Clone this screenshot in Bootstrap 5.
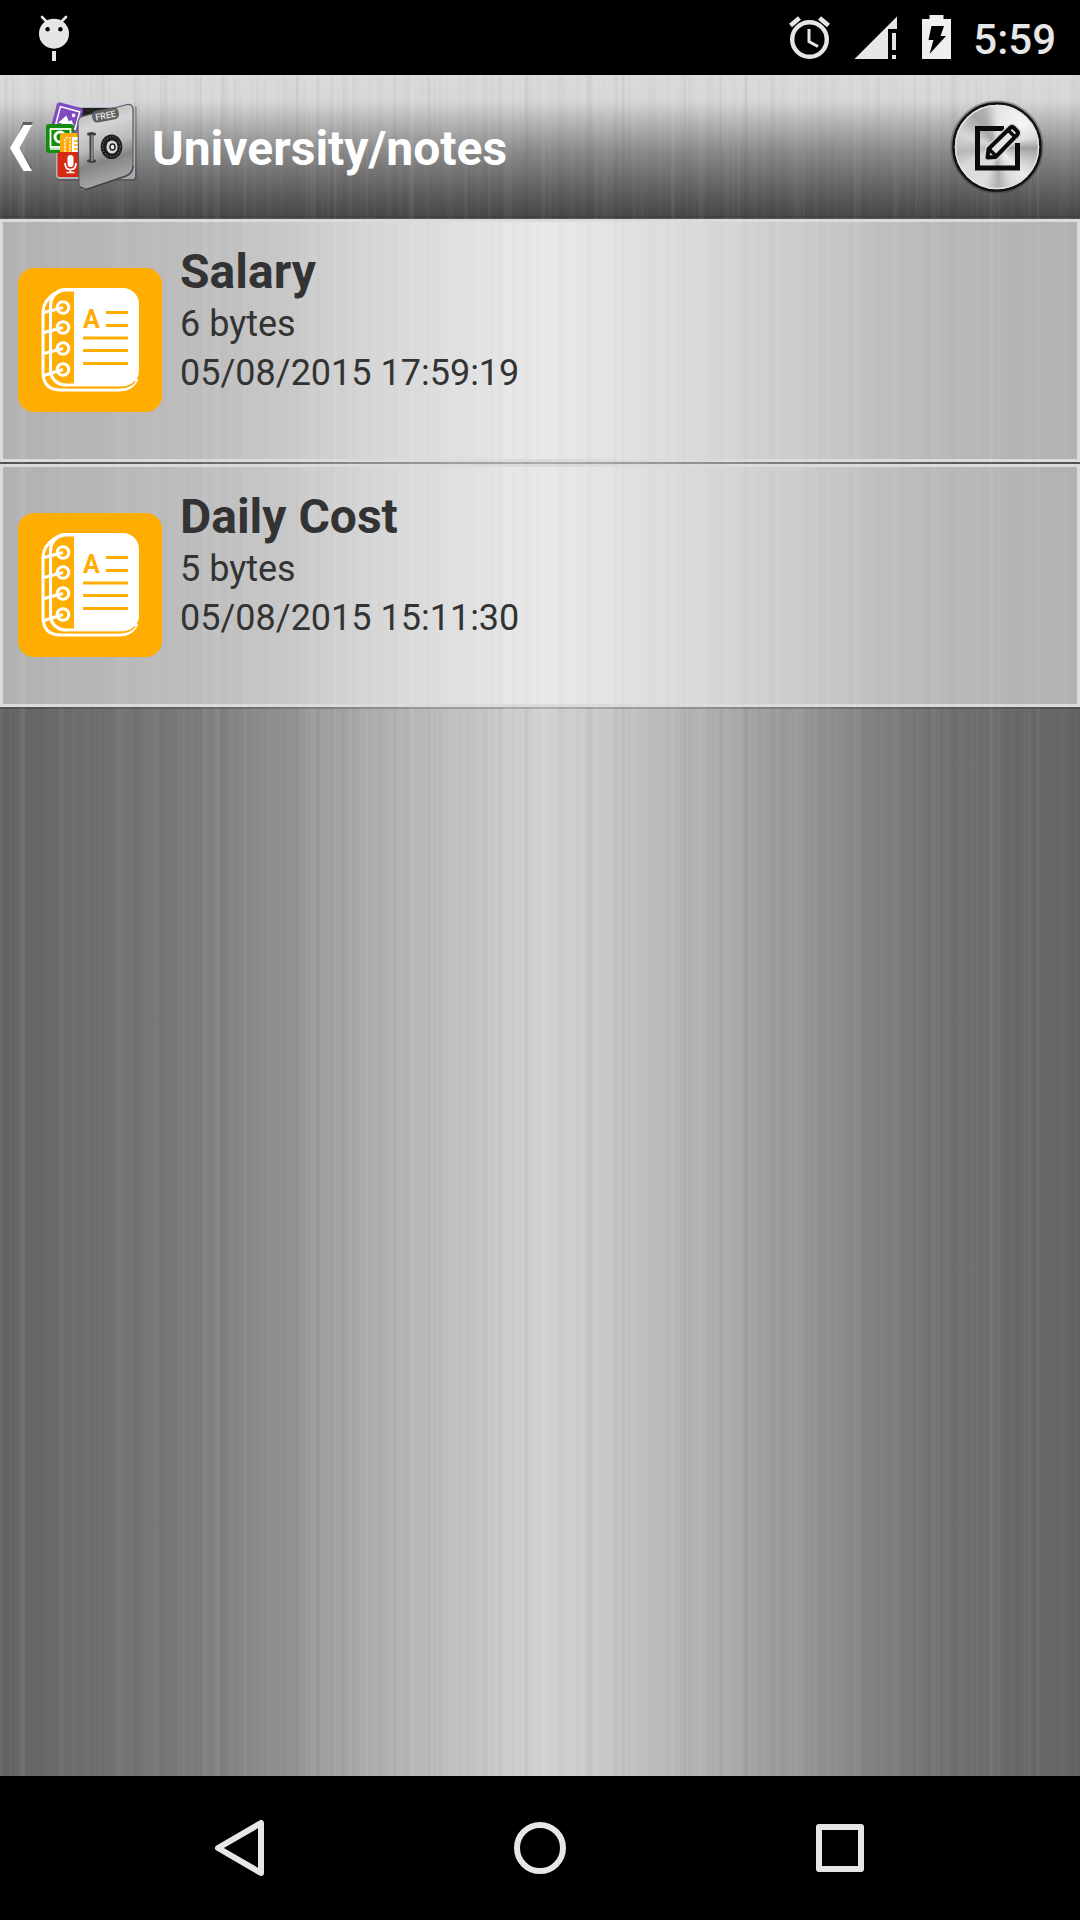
<!DOCTYPE html>
<html lang="en">
<head>
<meta charset="utf-8">
<meta name="viewport" content="width=device-width, initial-scale=1">
<title>University/notes</title>
<link href="https://cdn.jsdelivr.net/npm/bootstrap@5.3.0/dist/css/bootstrap.min.css" rel="stylesheet">
<style>
  :root {
    --grain:
      repeating-linear-gradient(90deg, rgba(255,255,255,.04) 0 2px, transparent 3px 11px, rgba(0,0,0,.025) 12px 14px, transparent 15px 22px, rgba(255,255,255,.03) 23px 24px, transparent 25px 37px, rgba(0,0,0,.02) 38px 43px, transparent 44px 61px),
      repeating-linear-gradient(90deg, transparent 0 5px, rgba(0,0,0,.03) 6px 7px, transparent 8px 19px, rgba(255,255,255,.04) 20px 25px, transparent 26px 40px, rgba(0,0,0,.03) 41px 42px, transparent 43px 58px, rgba(255,255,255,.03) 59px 61px, transparent 62px 97px),
      repeating-linear-gradient(90deg, transparent 0 17px, rgba(255,255,255,.03) 18px 19px, transparent 20px 33px, rgba(0,0,0,.03) 34px 36px, transparent 37px 71px, rgba(255,255,255,.04) 72px 74px, transparent 75px 90px, rgba(0,0,0,.03) 91px 92px, transparent 93px 131px),
      repeating-linear-gradient(90deg, transparent 0 4px, rgba(0,0,0,.02) 5px 6px, transparent 7px 9px, rgba(255,255,255,.02) 10px 11px, transparent 12px 13px);
  }
  body {
    font-family: Roboto, "Noto Sans", sans-serif;
    color: #333;
    background-color: #000;
  }
  .status-bar { height: 75px; background: #000; color: #e6e6e6; padding: 0 24px 0 36px; }
  .clock { font-size: 42px; line-height: 48px; font-weight: 500; padding-top: 4px; margin-left: 22px; }
  .title-bar {
    height: 144px;
    padding: 0 36px 0 8px;
    background: var(--grain), linear-gradient(#dadada 0, #d6d6d6 18%, #b4b4b4 33%, #8c8c8c 52%, #696767 75%, #484848 98%, #3c3c3c 98%, #555 100%);
  }
  .title-bar h1 { font-size: 48px; line-height: 56px; font-weight: 700; color: #fff; margin-left: 12px; padding-top: 4px; }
  .round-btn { width: 94px; height: 94px; }
  .steel {
    background: var(--grain), linear-gradient(90deg, #646464 0, #6c6c6c 7%, #7b7b7b 18%, #909090 26%, #acacac 34%, #c0c0c0 42%, #d2d2d2 50%, #cacaca 55%, #bebebe 60%, #b2b2b2 65%, #a2a2a2 70%, #929292 76%, #818181 81%, #747474 86%, #6b6b6b 93%, #646464 100%);
  }
  .note-item {
    border: 3px solid #dbdbdb;
    background: rgba(255,255,255,.5);
    background-clip: padding-box;
    padding: 22px 15px 0;
    height: 243px;
    gap: 18px;
    color: #333;
  }
  .note-item:hover { color: #333; }
  .note-row { border-bottom: 2px solid rgba(0,0,0,.18); }
  .note-icon { margin-top: 24px; }
  .note-name { font-size: 48px; line-height: 56px; font-weight: 700; }
  .note-info { font-size: 36px; line-height: 49px; }
  .nav-keys { height: 144px; background: #000; }
  .nav-keys button { width: 300px; height: 144px; }
</style>
</head>
<body class="min-vh-100 d-flex flex-column">

<div class="status-bar d-flex align-items-center justify-content-between">
  <svg width="36" height="75" viewBox="0 0 36 75" fill="#e6e6e6" aria-hidden="true">
    <circle cx="18" cy="33.700" r="15"/>
    <path d="M6 17l5 5M30 17l-5 5" stroke="#e6e6e6" stroke-width="2.600" stroke-linecap="round"/>
    <circle cx="11.600" cy="29.300" r="2.200" fill="#000"/><circle cx="24.400" cy="29.300" r="2.200" fill="#000"/>
    <path d="M16 51h4v10h-4z"/>
  </svg>
  <div class="d-flex align-items-center">
    <svg width="164" height="75" viewBox="788 0 164 75" fill="#e6e6e6" aria-hidden="true">
      <circle cx="810.500" cy="39.500" r="17.300" fill="none" stroke="#e6e6e6" stroke-width="4.400"/>
      <path d="M810 29v12.500l9 5" fill="none" stroke="#e6e6e6" stroke-width="3"/>
      <path d="M791.500 25.500l9-7.500M829.500 25.500l-9-7.500" stroke="#e6e6e6" stroke-width="4.600"/>
      <path d="M855.500 59L898 16.500V29h-9v30z"/>
      <path d="M893 33h4v17h-4zM893 55h4v4h-4z"/>
      <path d="M930.500 15h14v4h7.500v40h-29V19h7.500z" fill="#eee"/>
      <path d="M932.500 26h12.500l-3.500 10h5.500l-16.500 18 4-14h-5z" fill="#000"/>
    </svg>
    <span class="clock">5:59</span>
  </div>
</div>

<header class="title-bar d-flex align-items-center">
  <a href="#" class="d-flex align-items-center" aria-label="Back">
    <svg width="36" height="96" viewBox="0 0 36 96" aria-hidden="true">
      <path d="M15 23h10L11 48l13 21-3 2L5 49z" fill="#444" opacity=".75"/>
      <path d="M24 26L11.500 49 24 72h-8.500L2 49l13.500-23z" fill="#fff"/>
    </svg>
    <svg width="96" height="96" viewBox="0 0 96 96" aria-hidden="true">
      <defs>
        <linearGradient id="door" x1="0" y1="0" x2=".2" y2="1">
          <stop offset="0" stop-color="#aaa"/><stop offset=".3" stop-color="#d5d5d5"/>
          <stop offset=".55" stop-color="#bababa"/><stop offset=".72" stop-color="#858585"/><stop offset="1" stop-color="#a9a9a9"/>
        </linearGradient>
      </defs>
      <rect x="13" y="6" width="80" height="76" rx="4" fill="#333" opacity=".3"/>
      <rect x="12" y="3" width="79" height="77" rx="4" fill="#b4b4bc"/>
      <path d="M14 3h75l2 5H14z" fill="#d4d4dc"/>
      <path d="M30 9h48L34 20z" fill="#222"/>
      <path d="M82 72l8-5v13H74z" fill="#a5a5b4"/>
      <g transform="rotate(15 24 18)">
        <rect x="10" y="6" width="27" height="30" rx="3" fill="#7f4cc0"/>
        <rect x="14" y="10" width="20" height="18" fill="none" stroke="#fff" stroke-width="1.500"/>
        <path d="M16 26l6-9 4 5 2-2 5 6z" fill="#fff"/><circle cx="29" cy="15" r="1.800" fill="#fff"/>
      </g>
      <rect x="2" y="25" width="28" height="29" rx="3" fill="#128c0c"/>
      <rect x="6.500" y="30" width="20" height="18" fill="none" stroke="#fff" stroke-width="1.800"/>
      <circle cx="16" cy="38" r="5" fill="none" stroke="#fff" stroke-width="3"/>
      <path d="M6 50h21" stroke="#fff" stroke-width="1.500"/>
      <path d="M18 34h17v20H16V36z" fill="#ffa90a"/>
      <path d="M28 38h7v15h-7z" fill="#fff"/>
      <path d="M30 42h4M30 46h4M30 50h4" stroke="#ffa90a" stroke-width="1.500"/>
      <path d="M21 53V41q0-3 4-3M26 38v15" stroke="#fff" fill="none" stroke-width="1.200" stroke-dasharray="2.500 1"/>
      <rect x="13.500" y="53" width="24" height="25" rx="2" fill="#d42a16"/>
      <rect x="23.500" y="56" width="6" height="12" rx="3" fill="#fff"/>
      <path d="M21 64q0 6.500 5.500 6.500T32 64M26.500 70v3M22.500 73.500h8" stroke="#fff" stroke-width="1.700" fill="none"/>
      <path d="M34 24q0-5 4-6.500L83 5.500q6-1 6 5V66q0 8-7 11L42 91q-6 2-7-5z" fill="url(#door)" stroke="#5c5c5c" stroke-width="1.200"/>
      <path d="M36 88l6 2.500L82 77q7-3 7-10" fill="none" stroke="#444" stroke-width="1.500"/>
      <g transform="rotate(-11 61.500 16)">
        <rect x="48" y="10" width="27" height="12" rx="5" fill="#606060"/>
        <text x="61.500" y="19.500" font-size="9" font-weight="500" text-anchor="middle" fill="#e4e4e4">FREE</text>
      </g>
      <path d="M47.500 35v27" stroke="#3b3f44" stroke-width="4" stroke-linecap="round"/>
      <path d="M44.500 35h6M44.500 62h6" stroke="#3b3f44" stroke-width="3" stroke-linecap="round"/>
      <path d="M48 36v26" stroke="#9a9da4" stroke-width="1.500"/>
      <ellipse cx="67.500" cy="47.700" rx="10.800" ry="12.300" fill="#1c1c1c"/>
      <ellipse cx="67.500" cy="47.700" rx="8.700" ry="10" fill="none" stroke="#777" stroke-width="1.200" stroke-dasharray="1 2"/>
      <ellipse cx="68" cy="48" rx="5.600" ry="6.600" fill="#d8d8d8"/>
      <ellipse cx="68.500" cy="48" rx="2.500" ry="3" fill="#eee" stroke="#222" stroke-width="1.500"/>
    </svg>
  </a>
  <h1 class="mb-0">University/notes</h1>
  <button type="button" class="btn p-0 border-0 round-btn ms-auto" aria-label="New note">
    <svg class="d-block" width="94" height="94" viewBox="0 0 94 94" aria-hidden="true">
      <foreignObject x="3" y="3" width="88" height="88">
        <div style="width:88px;height:88px;border-radius:50%;background:conic-gradient(#e4e4e4 0deg,#f6f6f6 50deg,#ddd 75deg,#a0a0a0 92deg,#c8c8c8 112deg,#ececec 135deg,#dcdcdc 158deg,#b0b0b0 178deg,#dedede 198deg,#dadada 240deg,#b8b8b8 262deg,#d8d8d8 290deg,#a6a6a6 325deg,#b0b0b0 340deg,#e4e4e4 360deg)"></div>
      </foreignObject>
      <circle cx="47" cy="47" r="44.500" fill="none" stroke="#333" stroke-width="4" opacity=".4"/>
      <circle cx="47" cy="47" r="43.500" fill="none" stroke="#111" stroke-width="2.500"/>
      <circle cx="47" cy="47" r="41.500" fill="none" stroke="#e2e2e2" stroke-width="1.500"/>
      <path d="M54 28.500H27.500v39.500H67.500V43" fill="none" stroke="#0b0b0b" stroke-width="5"/>
      <path d="M37.500 57.500l1-8.500 21.500-21q2-2 4 0l3 3q2 2 0 4L45.500 57z" fill="none" stroke="#d4d4d4" stroke-width="7"/>
      <path d="M37.500 57.500l1-8.500 21.500-21q2-2 4 0l3 3q2 2 0 4L45.500 57z" fill="#e6e6e6" stroke="#0b0b0b" stroke-width="4" stroke-linejoin="round"/>
      <path d="M39 49l6.500 6.500M58 30l7 7" stroke="#0b0b0b" stroke-width="3.500"/>
    </svg>
  </button>
</header>

<main class="steel flex-grow-1">
  <ul class="list-unstyled mb-0">
    <li class="note-row">
      <a href="#" class="note-item d-flex align-items-start text-decoration-none">
        <svg class="note-icon flex-shrink-0" width="144" height="144" viewBox="0 0 144 144" aria-hidden="true">
          <g id="notebook">
            <rect width="144" height="144" rx="16" fill="#ffad03"/>
            <path d="M37 25Q25 33 25 44v60q0 18 18 18h58q13 0 18-11" fill="none" stroke="#fff" stroke-width="3"/>
            <rect x="31" y="20" width="90" height="98.500" rx="16" fill="#fff"/>
            <path d="M56 23.500H49Q34 24 34 40v60q0 15 15 15.500h7z" fill="#ffad03"/>
            <path d="M32.500 40v62" stroke="#fff" stroke-width="2.500"/>
            <path d="M29 38v62" stroke="#ffad03" stroke-width="1.500"/>
            <path d="M50 119.500h52q10 0 15-6" stroke="#ffad03" stroke-width="1.500" fill="none"/>
            <g fill="none" stroke="#fff" stroke-width="3">
              <circle cx="45" cy="39.500" r="5.800"/><path d="M26 44.500l19-5"/>
              <circle cx="45" cy="59.500" r="5.800"/><path d="M26 64.500l19-5"/>
              <circle cx="45" cy="80.500" r="5.800"/><path d="M26 85.500l19-5"/>
              <circle cx="45" cy="101.500" r="5.800"/><path d="M26 107.500l19-6"/>
            </g>
            <text x="65" y="60" font-size="25" font-weight="700" fill="#ffad03">A</text>
            <path d="M88 44.500h22M88 57.500h22M65 70h45M65 82.500h45M65 95.500h45" stroke="#ffad03" stroke-width="3.200"/>
          </g>
        </svg>
        <div>
          <div class="note-name">Salary</div>
          <div class="note-info">6 bytes</div>
          <div class="note-info">05/08/2015 17:59:19</div>
        </div>
      </a>
    </li>
    <li class="note-row">
      <a href="#" class="note-item d-flex align-items-start text-decoration-none">
        <svg class="note-icon flex-shrink-0" width="144" height="144" viewBox="0 0 144 144" aria-hidden="true"><use href="#notebook"/></svg>
        <div>
          <div class="note-name">Daily Cost</div>
          <div class="note-info">5 bytes</div>
          <div class="note-info">05/08/2015 15:11:30</div>
        </div>
      </a>
    </li>
  </ul>
</main>

<nav class="nav-keys d-flex justify-content-center" aria-label="System">
  <button type="button" class="btn border-0 p-0" aria-label="Back">
    <svg width="60" height="60" viewBox="0 0 60 60" fill="none" stroke="#e6e6e6" stroke-width="6" stroke-linejoin="round" aria-hidden="true"><path d="M51 5v50L8 30z"/></svg>
  </button>
  <button type="button" class="btn border-0 p-0" aria-label="Home">
    <svg width="60" height="60" viewBox="0 0 60 60" fill="none" stroke="#e6e6e6" stroke-width="6" aria-hidden="true"><circle cx="30" cy="30" r="23"/></svg>
  </button>
  <button type="button" class="btn border-0 p-0" aria-label="Recent apps">
    <svg width="60" height="60" viewBox="0 0 60 60" fill="none" stroke="#e6e6e6" stroke-width="6" stroke-linejoin="round" aria-hidden="true"><path d="M9 9h42v42H9z"/></svg>
  </button>
</nav>

<script src="https://cdn.jsdelivr.net/npm/bootstrap@5.3.0/dist/js/bootstrap.bundle.min.js"></script>
</body>
</html>
